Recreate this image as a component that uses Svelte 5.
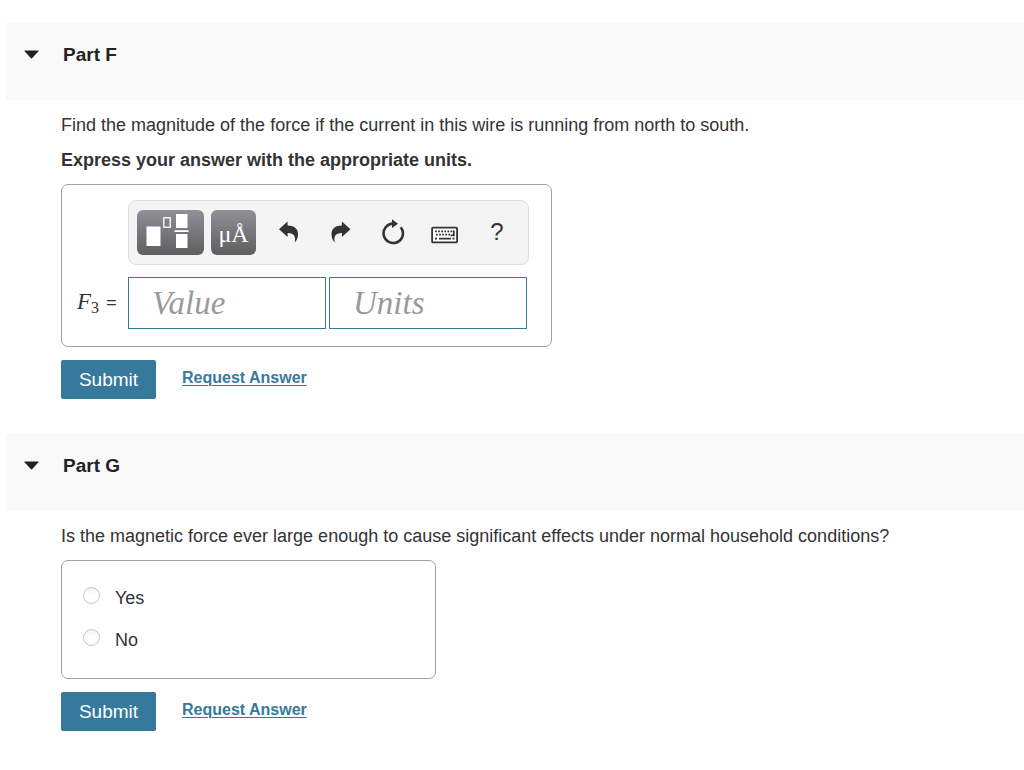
<script lang="ts">
    let openF = true;
    let openG = true;
    let value = "";
    let units = "";
    let choice = "";

    const choices = ["Yes", "No"];
</script>

<main>
    <section class="part">
        <header class="part-header">
            <button class="toggle" aria-label="Toggle Part F" aria-expanded={openF} on:click={() => (openF = !openF)}>
                <svg width="15" height="9" viewBox="0 0 15 9"><path d="M1 .5h13q1 0 .4.8L8.3 8q-.8.8-1.6 0L.6 1.3Q0 .5 1 .5z" fill="#222" /></svg>
            </button>
            <h2>Part F</h2>
        </header>
        {#if openF}
            <div class="part-body">
                <p class="question">Find the magnitude of the force if the current in this wire is running from north to south.</p>
                <p class="instructions">Express your answer with the appropriate units.</p>

                <div class="box answer-box">
                    <div class="toolbar">
                        <button class="tool template" aria-label="Templates">
                            <svg width="67" height="45" viewBox="0 0 67 45">
                                <g fill="#fff">
                                    <rect x="9.5" y="16.5" width="14" height="19.5" />
                                    <rect x="39" y="4" width="11.5" height="14" />
                                    <rect x="37.5" y="20.2" width="14" height="1.8" />
                                    <rect x="39" y="24" width="11.5" height="14" />
                                </g>
                                <rect x="26.8" y="7.8" width="6.4" height="9.4" fill="none" stroke="#fff" stroke-width="1.3" />
                            </svg>
                        </button>
                        <button class="tool symbols" aria-label="Units symbols">μÅ</button>
                        <button class="tool" aria-label="Undo">
                            <svg width="20" height="24" viewBox="0 0 20 24"><path d="M0 8.3 8.6.6V4.6C15 4.6 19 7.5 19 13.2c0 3.3-1.1 6-3.3 8.3C17 15.6 15.2 12 8.6 12v4z" fill="#333" /></svg>
                        </button>
                        <button class="tool" aria-label="Redo">
                            <svg width="20" height="24" viewBox="0 0 20 24"><path d="M19.5 8.3 10.9.6V4.6C4.5 4.6.5 7.5.5 13.2c0 3.3 1.1 6 3.3 8.3C2.5 15.6 4.3 12 10.9 12v4z" fill="#333" /></svg>
                        </button>
                        <button class="tool" aria-label="Reset">
                            <svg width="24" height="28" viewBox="0 0 24 28">
                                <path d="M19.8 8.2A9.7 9.7 0 1 1 12 4.6" fill="none" stroke="#333" stroke-width="2.6" />
                                <path d="M11 .2 17 4.7 11 9z" fill="#333" />
                            </svg>
                        </button>
                        <button class="tool keyboard" aria-label="Keyboard">
                            <svg width="28" height="18" viewBox="0 0 28 18">
                                <rect x="1.1" y="1.6" width="25" height="14.8" rx="1" fill="#fff" stroke="#333" stroke-width="1.8" />
                                <path d="M4 5.3h19M5 8.7h15" stroke="#333" stroke-width="1.8" stroke-dasharray="1.8 1.3" />
                                <path d="M4 12.7h2M8 12.7h12M21.5 12.7h2M22.8 4.4v5h-3" stroke="#333" stroke-width="1.7" fill="none" />
                            </svg>
                        </button>
                        <button class="tool help" aria-label="Help">?</button>
                    </div>
                    <label class="variable" for="f3-value"><i>F</i><sub>3</sub><span class="equals">=</span></label>
                    <div class="fields">
                        <input id="f3-value" type="text" placeholder="Value" bind:value />
                        <input type="text" placeholder="Units" aria-label="Units" bind:value={units} />
                    </div>
                </div>

                <div class="actions">
                    <button class="submit">Submit</button>
                    <a href="#answer-f">Request Answer</a>
                </div>
            </div>
        {/if}
    </section>

    <section class="part">
        <header class="part-header">
            <button class="toggle" aria-label="Toggle Part G" aria-expanded={openG} on:click={() => (openG = !openG)}>
                <svg width="15" height="9" viewBox="0 0 15 9"><path d="M1 .5h13q1 0 .4.8L8.3 8q-.8.8-1.6 0L.6 1.3Q0 .5 1 .5z" fill="#222" /></svg>
            </button>
            <h2>Part G</h2>
        </header>
        {#if openG}
            <div class="part-body">
                <p class="question">Is the magnetic force ever large enough to cause significant effects under normal household conditions?</p>

                <div class="box choice-box">
                    {#each choices as item}
                        <label class="choice">
                            <input type="radio" name="part-g" value={item} bind:group={choice} />
                            <span>{item}</span>
                        </label>
                    {/each}
                </div>

                <div class="actions">
                    <button class="submit">Submit</button>
                    <a href="#answer-g">Request Answer</a>
                </div>
            </div>
        {/if}
    </section>
</main>

<style>
:global(body) {
    margin: 0;
    background: #fff;
}

main {
    padding: 23px 0 0 6px;
    font-family: "Liberation Sans", Arial, sans-serif;
    font-size: 18px;
    line-height: 24px;
    color: #333;
}

button {
    padding: 0;
    border: 0;
    background: none;
    font-family: inherit;
    cursor: pointer;
}

svg {
    display: block;
}

.part {
    margin-bottom: 35px;
}

.part-header {
    display: flex;
    align-items: flex-start;
    gap: 24px;
    padding: 20px 18px 33px;
    background: #f9f9f9;
}

.toggle {
    display: flex;
    align-items: center;
    height: 22px;
}

h2 {
    margin: 0;
    font-size: 19px;
    line-height: 24px;
    color: #222;
}

.part-body {
    padding: 13px 16px 0 55px;
}

p {
    margin: 0;
}

.instructions {
    margin-top: 11px;
    font-weight: bold;
}

.box {
    box-sizing: border-box;
    max-width: 100%;
    margin-top: 12px;
    border: 1px solid #a0a0a0;
    border-radius: 7px;
}

.answer-box {
    display: grid;
    grid-template-columns: 51px auto;
    row-gap: 12px;
    width: 491px;
    padding: 15px 22px 17px 15px;
}

.toolbar {
    grid-column: 2;
    display: flex;
    align-items: center;
    box-sizing: border-box;
    justify-self: start;
    height: 65px;
    padding: 0 5px 0 8px;
    border: 1px solid #ddd;
    border-radius: 8px;
    background: #f4f4f4;
}

.tool {
    display: flex;
    flex: none;
    align-items: center;
    justify-content: center;
    width: 52px;
    height: 45px;
    color: #333;
}

.template,
.symbols {
    border-radius: 6px;
    background: linear-gradient(#918f98, #5e5e5e);
    color: #fff;
}

.template {
    width: 67px;
    margin-right: 7px;
}

.symbols {
    width: 45px;
    margin-right: 7px;
    padding-top: 3px;
    font-family: "Liberation Serif", serif;
    font-size: 24px;
}

.keyboard {
    padding-top: 4px;
}

.help {
    padding-bottom: 2px;
    font-size: 24px;
}

.variable {
    align-self: center;
    font-family: "Liberation Serif", serif;
    font-size: 23px;
    white-space: nowrap;
}

.variable sub {
    font-size: 16px;
    line-height: 1;
    vertical-align: -4px;
}

.equals {
    margin-left: 7px;
    font-size: 19px;
    font-weight: bold;
}

.fields {
    display: flex;
    gap: 3px;
}

.fields input {
    box-sizing: border-box;
    width: 198px;
    min-width: 0;
    height: 52px;
    padding: 0 23px;
    border: 1px solid #367a9b;
    border-radius: 0;
    font-family: "Liberation Serif", serif;
    font-size: 33px;
    color: #333;
}

.fields input::placeholder {
    font-style: italic;
    color: #999;
}

.choice-box {
    display: flex;
    flex-direction: column;
    gap: 18px;
    width: 375px;
    padding: 25px 21px 26px;
}

.choice {
    display: flex;
    align-items: flex-start;
    gap: 15px;
}

.choice input {
    appearance: none;
    box-sizing: border-box;
    width: 17px;
    height: 17px;
    margin: 1px 0 0;
    border: 1px solid #c4c4c4;
    border-radius: 50%;
    background: linear-gradient(#f2f2f2, #fff 40%);
}

.choice input:checked {
    border: 5px solid #367a9b;
}

.actions {
    display: flex;
    align-items: flex-start;
    gap: 26px;
    margin-top: 13px;
}

.submit {
    width: 95px;
    height: 39px;
    border-radius: 2px;
    background: #367a9b;
    font-size: 19px;
    color: #fff;
}

.actions a {
    padding-top: 6px;
    font-size: 16px;
    font-weight: bold;
    color: #367a9b;
    text-underline-offset: 2px;
    text-decoration-thickness: 1px;
}
</style>
